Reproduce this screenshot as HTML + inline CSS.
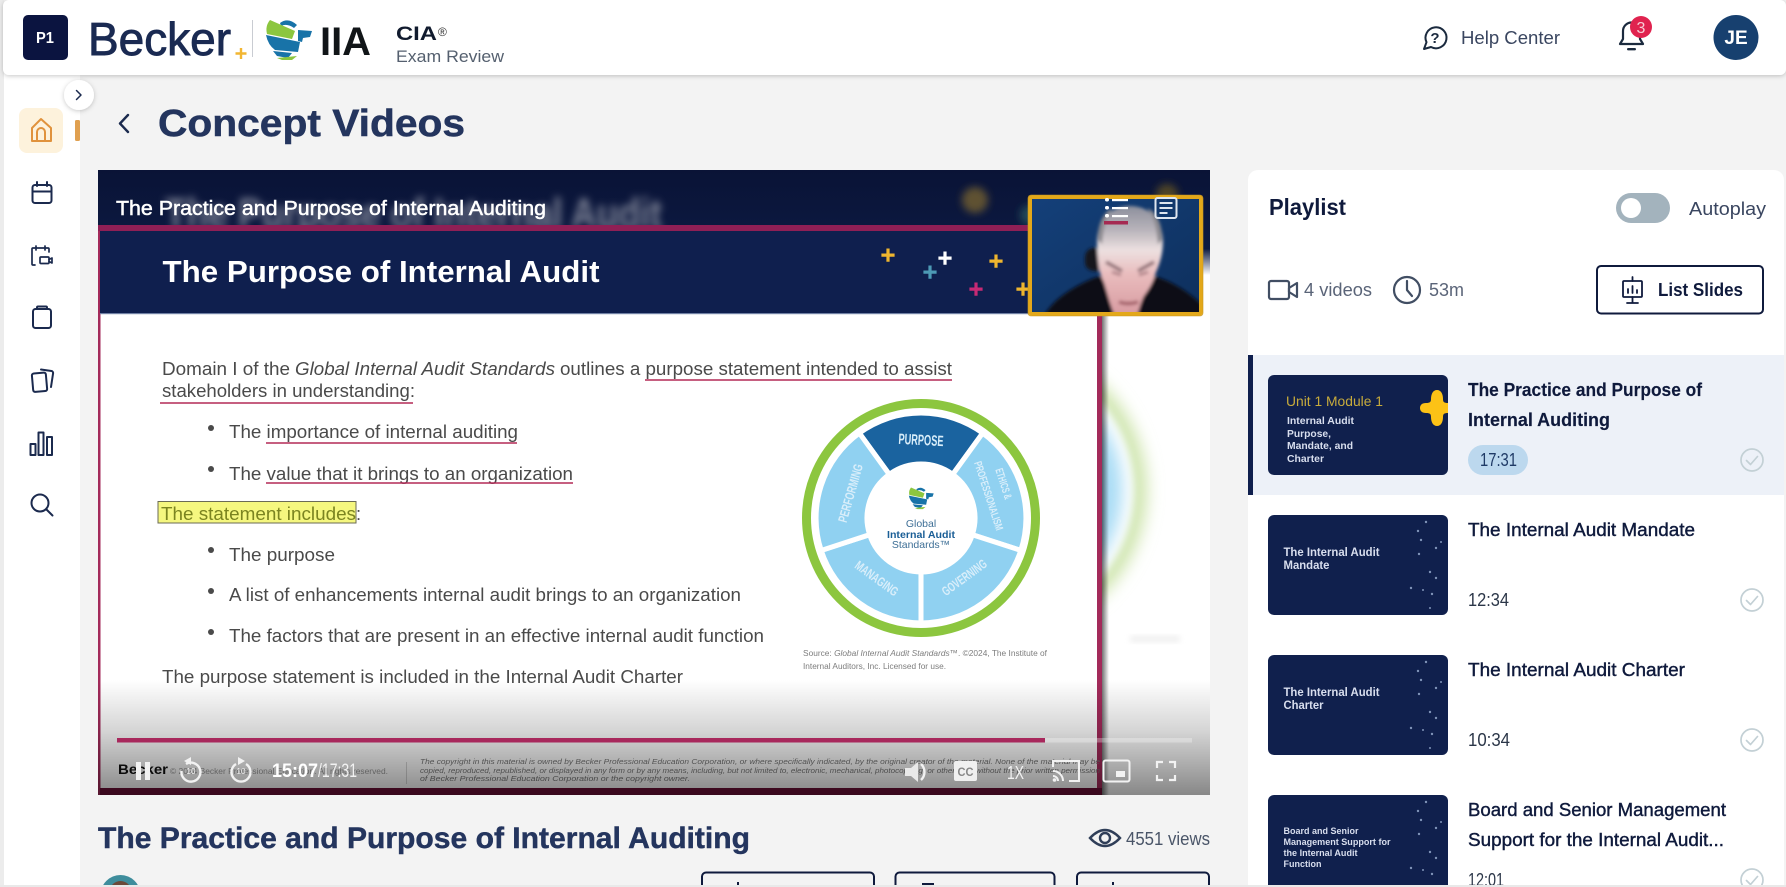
<!DOCTYPE html>
<html lang="en">
<head>
<meta charset="utf-8">
<title>Concept Videos</title>
<style>
html,body{margin:0;padding:0;width:1786px;height:887px;overflow:hidden;background:#f3f3f3}
svg{display:block}
text{font-family:"Liberation Sans",Arial,sans-serif}
.i{fill:none;stroke:#1b2a4e;stroke-width:2;stroke-linecap:round;stroke-linejoin:round}
.b{font-size:18.3px;fill:#4a4a4a}
.pt{font-size:18px;font-weight:700;fill:#0f1a3c;stroke:#0f1a3c;stroke-width:.15}
.pm{font-size:18px;fill:#0f1a3c;stroke:#0f1a3c;stroke-width:.4}
.d{font-size:18px;fill:#2b3648}
.th{font-weight:700;fill:#d8deee}
.ck{fill:none;stroke:#c3d0d5;stroke-width:1.7;stroke-linecap:round;stroke-linejoin:round}
.ul{stroke:#b32a57;stroke-width:1.4}
.seg{font-weight:700;fill:#d9eefa;text-anchor:middle}
</style>
</head>
<body>
<svg width="1786" height="887" viewBox="0 0 1786 887" xmlns="http://www.w3.org/2000/svg">
<defs>
<filter id="bl4" x="-30%" y="-30%" width="160%" height="160%"><feGaussianBlur stdDeviation="4"/></filter>
<filter id="bl8" x="-30%" y="-30%" width="160%" height="160%"><feGaussianBlur stdDeviation="8"/></filter>
<filter id="bl1" x="-20%" y="-20%" width="140%" height="140%"><feGaussianBlur stdDeviation="1.6"/></filter>
<filter id="bl3" x="-40%" y="-40%" width="180%" height="180%"><feGaussianBlur stdDeviation="3"/></filter>
<filter id="blt" x="-5%" y="-20%" width="110%" height="140%"><feGaussianBlur stdDeviation=".35"/></filter>
<filter id="sh" x="-50%" y="-50%" width="200%" height="200%"><feDropShadow dx="0" dy="1" stdDeviation="2.5" flood-color="#000" flood-opacity=".22"/></filter>
<linearGradient id="ctl" x1="0" y1="0" x2="0" y2="1"><stop offset="0" stop-color="#000" stop-opacity="0"/><stop offset=".45" stop-color="#000" stop-opacity=".17"/><stop offset="1" stop-color="#000" stop-opacity=".47"/></linearGradient>
<linearGradient id="hd" x1="0" y1="0" x2="0" y2="1"><stop offset="0" stop-color="#0a1336"/><stop offset=".75" stop-color="#0c1a42"/><stop offset="1" stop-color="#0c1a42" stop-opacity="0"/></linearGradient>
<linearGradient id="pipbg" x1="0" y1="0" x2="1" y2="1"><stop offset="0" stop-color="#14407a"/><stop offset="1" stop-color="#0e2f5c"/></linearGradient>
<linearGradient id="head" x1="0" y1="0" x2="0" y2="1"><stop offset="0" stop-color="#8c8f9c"/><stop offset=".22" stop-color="#b9b4bb"/><stop offset=".4" stop-color="#ece0e0"/><stop offset=".62" stop-color="#e9bcbd"/><stop offset="1" stop-color="#d79aa0"/></linearGradient>
<linearGradient id="shd" x1="0" y1="0" x2="1" y2="0"><stop offset="0" stop-color="#000" stop-opacity=".55"/><stop offset="1" stop-color="#000" stop-opacity="0"/></linearGradient>
<clipPath id="vid"><rect x="98" y="170" width="1112" height="625"/></clipPath>
<clipPath id="right"><rect x="1102" y="260" width="108" height="535"/></clipPath>
<clipPath id="top"><rect x="98" y="170" width="1112" height="56"/></clipPath>
<clipPath id="pip"><rect x="1030" y="197" width="171" height="117" rx="2"/></clipPath>
<clipPath id="page"><rect x="0" y="0" width="1786" height="885"/></clipPath>
<clipPath id="th1"><rect x="1268" y="375" width="180" height="100" rx="6"/></clipPath>
<g id="globe">
<path d="M280 23Q288 17 297 25L294 28Q287 23 281 26Z" fill="#1873a8"/>
<path d="M270 20L295 31L292 39L267 34Q265 26 270 20Z" fill="#8cc63f"/>
<path d="M266 35L300 42L298 52L275 50Q268 45 266 35Z" fill="#1873a8"/>
<path d="M298 30L312 31L310 37L303 38L302 42L298 41Z" fill="#1873a8"/>
<path d="M273 51L292 53L288 58L277 56Z" fill="#1873a8"/>
<path d="M277 58L297 56L292 60L282 60Z" fill="#8cc63f"/>
</g>
<g id="dots" fill="#7f93b8">
<circle cx="158" cy="7" r="1.2"/><circle cx="150" cy="16" r="1.2"/><circle cx="153" cy="25" r="1.2"/><circle cx="173" cy="27" r="1"/><circle cx="168" cy="33" r="1.2"/><circle cx="151" cy="39" r="1.2"/><circle cx="162" cy="57" r="1.2"/><circle cx="168" cy="63" r="1.2"/><circle cx="143" cy="73" r="1.2"/><circle cx="155" cy="75" r="1"/><circle cx="164" cy="79" r="1.2"/><circle cx="162" cy="93" r="1"/>
</g>
<path id="sp" d="M-1.6 -6.5h3.2v5h5v3.2h-5v5h-3.2v-5h-5v-3.2h5z"/>
</defs>

<rect width="1786" height="887" fill="#f3f3f3"/>

<!-- sidebar -->
<rect x="4" y="70" width="76" height="817" fill="#fff"/>
<rect x="0" y="0" width="4" height="887" fill="#ececec"/>
<!-- header -->
<rect x="3" y="0" width="1783" height="75" rx="6" fill="#fff" filter="url(#sh)"/>

<rect x="23" y="15" width="45" height="45" rx="5" fill="#0b1440"/>
<text x="36" y="43" font-size="15.500" font-weight="700" fill="#fff" textLength="18" lengthAdjust="spacingAndGlyphs">P1</text>
<text x="88" y="55" font-size="46" fill="#1a2a52" stroke="#1a2a52" stroke-width=".9" textLength="143" lengthAdjust="spacingAndGlyphs">Becker</text>
<path d="M235.500 53.500h11M241 48v11" stroke="#f2b632" stroke-width="2.400" fill="none"/>
<rect x="252" y="20" width="1" height="37" fill="#c9ccd2"/>
<use href="#globe"/>
<text x="320" y="55" font-size="40" font-weight="700" fill="#111518" textLength="51" lengthAdjust="spacingAndGlyphs">IIA</text>
<text x="396" y="40" font-size="19" font-weight="700" fill="#111b2e" textLength="41" lengthAdjust="spacingAndGlyphs">CIA</text>
<text x="438" y="36" font-size="12" fill="#333">®</text>
<text x="396" y="62" font-size="17" fill="#55606f" textLength="108" lengthAdjust="spacingAndGlyphs">Exam Review</text>

<!-- help -->
<path d="M1424 49l2.500-6.800A10.500 10.500 0 1 1 1431 47Z" fill="none" stroke="#1b2a3e" stroke-width="2" stroke-linejoin="round"/>
<text x="1435" y="43" font-size="15" font-weight="700" fill="#1b2a3e" text-anchor="middle">?</text>
<text x="1461" y="44" font-size="18.500" fill="#3a4660" textLength="99" lengthAdjust="spacingAndGlyphs">Help Center</text>
<!-- bell -->
<g fill="none" stroke="#1b2a3e" stroke-width="2.200" stroke-linecap="round" stroke-linejoin="round">
<path d="M1620 44h23l-3-5v-8a8.500 8.500 0 0 0-17 0v8Z"/>
</g>
<rect x="1627" y="48" width="9" height="2.400" rx="1.200" fill="#1b2a3e"/>
<circle cx="1641" cy="27" r="11" fill="#e0234f"/>
<text x="1641" y="33" font-size="16" fill="#f7cdd6" text-anchor="middle">3</text>
<circle cx="1736" cy="37.500" r="22.500" fill="#17406f"/>
<text x="1736" y="44" font-size="19" font-weight="700" fill="#fff" text-anchor="middle">JE</text>

<!-- sidebar icons -->
<rect x="19" y="108" width="44" height="45" rx="8" fill="#fdf2dc"/>
<g fill="none" stroke="#e0923c" stroke-width="2" stroke-linejoin="round" stroke-linecap="round">
<path d="M32 141v-13l9-9 10 9v13Z"/><path d="M37 141v-9a4 4 0 0 1 8 0v9"/>
</g>
<rect x="75" y="120" width="5" height="21" rx="1.500" fill="#e0a050"/>
<g class="i">
<rect x="32.500" y="185" width="19" height="18" rx="2.500"/><path d="M32.500 191.500h19M37 182v4M47 182v4"/>
<path d="M35 265h-2a1 1 0 0 1-1-1v-15a1 1 0 0 1 1-1h15a1 1 0 0 1 1 1v3M36 246v4M45 246v4" stroke-width="1.700"/>
<rect x="40" y="257" width="9" height="6.500" rx="1" stroke-width="1.700"/><path d="M49 259.500l3-1.500v5l-3-1.500" stroke-width="1.700"/>
<rect x="33" y="309" width="18" height="19" rx="2.500"/><path d="M37 309v-1.500a1 1 0 0 1 1-1h8a1 1 0 0 1 1 1v1.500"/>
<rect x="32.500" y="373" width="14" height="18.500" rx="2" transform="rotate(-5 39.500 382)"/>
<path d="M41 369.500l10.500 1.500a2 2 0 0 1 1.600 2.200L51 387"/>
<rect x="30.500" y="444" width="5" height="11"/><rect x="38.500" y="432.500" width="5" height="22.500"/><rect x="47" y="437" width="5" height="18"/>
<circle cx="40" cy="503" r="8.500"/><path d="M46.500 509.500l6 6"/>
</g>
<!-- collapse -->
<circle cx="79" cy="95" r="15" fill="#fff" filter="url(#sh)"/>
<path d="M76.500 90.500l4.500 4.500-4.500 4.500" fill="none" stroke="#1b2a4e" stroke-width="1.500" stroke-linecap="round" stroke-linejoin="round"/>

<!-- title -->
<path d="M128 115l-8 8.500 8 8.500" fill="none" stroke="#1b2a4e" stroke-width="2.400" stroke-linecap="round" stroke-linejoin="round"/>
<text x="158" y="136" font-size="38" font-weight="700" fill="#24355e" stroke="#24355e" stroke-width=".5" textLength="307" lengthAdjust="spacingAndGlyphs">Concept Videos</text>

<!-- VIDEO -->
<g clip-path="url(#vid)">
<rect x="98" y="170" width="1112" height="625" fill="#fff"/>
<rect x="98" y="170" width="1112" height="105" fill="url(#hd)"/>
<!-- blurred backdrop -->
<g clip-path="url(#top)">
<text x="165" y="228" font-size="43" font-weight="700" fill="#7d8294" filter="url(#bl4)" textLength="497" lengthAdjust="spacingAndGlyphs">The Purpose of Internal Audit</text>
<circle cx="975" cy="200" r="13" fill="#5f5130" filter="url(#bl4)"/>
<circle cx="1030" cy="215" r="10" fill="#234a58" filter="url(#bl4)"/>
<circle cx="1167" cy="195" r="11" fill="#4f4526" filter="url(#bl4)"/>
</g>
<g clip-path="url(#right)">
<circle cx="1000" cy="490" r="147" fill="#cfe5ad" filter="url(#bl8)"/>
<circle cx="1000" cy="490" r="134" fill="#fff" filter="url(#bl4)"/>
<circle cx="1000" cy="490" r="122" fill="#a9dcf5" filter="url(#bl8)"/>
<rect x="1130" y="636" width="50" height="6" fill="#efefef" filter="url(#bl3)"/>
</g>
<rect x="1102" y="314" width="7" height="481" fill="url(#shd)"/>

<!-- slide -->
<rect x="98" y="226" width="1004" height="569" fill="#a32a5a"/>
<rect x="100.500" y="231" width="996.500" height="557" fill="#fff"/>
<rect x="100" y="231" width="1000" height="83" fill="#0f1f4e"/>
<rect x="100" y="313" width="1000" height="1.200" fill="#6f7fa3"/>
<rect x="98" y="225" width="1004" height="6" fill="#8f1f55"/>
<rect x="100" y="788" width="1002" height="7" fill="#6d1037"/>

<text x="162.500" y="282" font-size="30.500" font-weight="700" fill="#fff" textLength="437" lengthAdjust="spacingAndGlyphs">The Purpose of Internal Audit</text>
<g>
<use href="#sp" x="888" y="255" fill="#eeb52f"/><use href="#sp" x="945" y="258" fill="#fff"/><use href="#sp" x="930" y="272" fill="#4d9ab5"/><use href="#sp" x="996" y="261" fill="#eeb52f"/><use href="#sp" x="976" y="289" fill="#c62a74"/><use href="#sp" x="1023" y="289" fill="#eeb52f"/>
</g>

<text class="b" x="162" y="375" textLength="128" lengthAdjust="spacingAndGlyphs">Domain I of the</text>
<text class="b" x="295" y="375" font-style="italic" textLength="260" lengthAdjust="spacingAndGlyphs">Global Internal Audit Standards</text>
<text class="b" x="560" y="375" textLength="392" lengthAdjust="spacingAndGlyphs">outlines a purpose statement intended to assist</text>
<text class="b" x="162" y="397" textLength="253" lengthAdjust="spacingAndGlyphs">stakeholders in understanding:</text>
<circle cx="211" cy="428" r="3" fill="#4a4a4a"/>
<text class="b" x="229" y="438" textLength="289" lengthAdjust="spacingAndGlyphs">The importance of internal auditing</text>
<circle cx="211" cy="469" r="3" fill="#4a4a4a"/>
<text class="b" x="229" y="480" textLength="344" lengthAdjust="spacingAndGlyphs">The value that it brings to an organization</text>
<rect x="158" y="501.500" width="198" height="21.500" fill="#f5f77f" stroke="#6b6b55" stroke-width="1"/>
<text class="b" x="161" y="520" style="fill:#7b8420" textLength="195" lengthAdjust="spacingAndGlyphs">The statement includes</text>
<text class="b" x="356" y="520">:</text>
<circle cx="211" cy="550" r="3" fill="#4a4a4a"/>
<text class="b" x="229" y="561" textLength="106" lengthAdjust="spacingAndGlyphs">The purpose</text>
<circle cx="211" cy="591" r="3" fill="#4a4a4a"/>
<text class="b" x="229" y="601" textLength="512" lengthAdjust="spacingAndGlyphs">A list of enhancements internal audit brings to an organization</text>
<circle cx="211" cy="632" r="3" fill="#4a4a4a"/>
<text class="b" x="229" y="642" textLength="535" lengthAdjust="spacingAndGlyphs">The factors that are present in an effective internal audit function</text>
<text class="b" x="162" y="683" textLength="521" lengthAdjust="spacingAndGlyphs">The purpose statement is included in the Internal Audit Charter</text>
<path class="ul" d="M645 380H952M160 403H413M266 443H517M266 483H573"/>

<!-- wheel -->
<circle cx="921" cy="518" r="114.500" fill="none" stroke="#8cc63f" stroke-width="9"/>
<g stroke="#fff" stroke-width="5" stroke-linejoin="round">
<path fill="#1a639f" d="M859.300 433.100A105 105 0 0 1 982.700 433.100L952.700 474.300A54 54 0 0 0 889.300 474.300Z"/>
<path fill="#90d1f1" transform="rotate(72 921 518)" d="M859.300 433.100A105 105 0 0 1 982.700 433.100L952.700 474.300A54 54 0 0 0 889.300 474.300Z"/>
<path fill="#90d1f1" transform="rotate(144 921 518)" d="M859.300 433.100A105 105 0 0 1 982.700 433.100L952.700 474.300A54 54 0 0 0 889.300 474.300Z"/>
<path fill="#90d1f1" transform="rotate(216 921 518)" d="M859.300 433.100A105 105 0 0 1 982.700 433.100L952.700 474.300A54 54 0 0 0 889.300 474.300Z"/>
<path fill="#90d1f1" transform="rotate(288 921 518)" d="M859.300 433.100A105 105 0 0 1 982.700 433.100L952.700 474.300A54 54 0 0 0 889.300 474.300Z"/>
</g>
<text class="seg" x="921" y="445" font-size="15" transform="rotate(3 921 440)" textLength="45" lengthAdjust="spacingAndGlyphs">PURPOSE</text>
<text class="seg" x="850" y="498" font-size="13" transform="rotate(-74 850 493)" textLength="60" lengthAdjust="spacingAndGlyphs">PERFORMING</text>
<text class="seg" x="877" y="583" font-size="13" transform="rotate(36 877 578)" textLength="50" lengthAdjust="spacingAndGlyphs">MANAGING</text>
<text class="seg" x="964" y="582" font-size="13" transform="rotate(-36 964 577)" textLength="52" lengthAdjust="spacingAndGlyphs">GOVERNING</text>
<text class="seg" x="1003" y="487" font-size="11" transform="rotate(72 1003 484)" textLength="32" lengthAdjust="spacingAndGlyphs">ETHICS &amp;</text>
<text class="seg" x="988" y="499" font-size="11" transform="rotate(72 988 496)" textLength="72" lengthAdjust="spacingAndGlyphs">PROFESSIONALISM</text>
<g transform="translate(921 498) scale(.54) translate(-288.500 -39.500)"><use href="#globe"/></g>
<text x="921" y="527" font-size="10.500" fill="#3e6f96" text-anchor="middle">Global</text>
<text x="921" y="538" font-size="10.500" font-weight="700" fill="#1a5e96" text-anchor="middle" textLength="68" lengthAdjust="spacingAndGlyphs">Internal Audit</text>
<text x="921" y="548" font-size="10.500" fill="#3e6f96" text-anchor="middle">Standards™</text>
<text x="803" y="656" font-size="8.700" fill="#7d7d7d" textLength="244" lengthAdjust="spacingAndGlyphs">Source: <tspan font-style="italic">Global Internal Audit Standards™</tspan>. ©2024, The Institute of</text>
<text x="803" y="669" font-size="8.700" fill="#7d7d7d" textLength="143" lengthAdjust="spacingAndGlyphs">Internal Auditors, Inc. Licensed for use.</text>

<!-- slide footer -->
<text x="118" y="774" font-size="14" font-weight="700" fill="#111" textLength="50" lengthAdjust="spacingAndGlyphs">Becker</text>
<text x="170" y="774" font-size="8" fill="#9a9a9a" filter="url(#blt)" textLength="218" lengthAdjust="spacingAndGlyphs">© 2024 Becker Professional Education. All rights reserved.</text>
<rect x="406" y="762" width="1" height="22" fill="#d5d5d5"/>
<g font-size="7.500" font-style="italic" fill="#777" filter="url(#blt)">
<text x="420" y="764" textLength="680" lengthAdjust="spacingAndGlyphs">The copyright in this material is owned by Becker Professional Education Corporation, or where specifically indicated, by the original creator of the material. None of the material may be</text>
<text x="420" y="773" textLength="680" lengthAdjust="spacingAndGlyphs">copied, reproduced, republished, or displayed in any form or by any means, including, but not limited to, electronic, mechanical, photocopying, or otherwise, without the prior written permission</text>
<text x="420" y="781" textLength="270" lengthAdjust="spacingAndGlyphs">of Becker Professional Education Corporation or the copyright owner.</text>
</g>

<!-- gradient -->
<rect x="98" y="680" width="1112" height="115" fill="url(#ctl)"/>

<!-- progress -->
<rect x="117" y="738" width="1075" height="4.500" fill="#fff" opacity=".3"/>
<rect x="117" y="738" width="928" height="4.500" fill="#a8285c"/>

<!-- controls -->
<rect x="136" y="762" width="5" height="18" fill="#f2f2f2"/><rect x="145" y="762" width="5" height="18" fill="#f2f2f2"/>
<g fill="none" stroke="#f2f2f2" stroke-width="2.400">
<path d="M186 764a9.500 9.500 0 1 1-4.500 7"/>
<path d="M236 764a9.500 9.500 0 1 0 10 0"/>
</g>
<path d="M191 757v8l-7-4Z M238 757v8l7-4Z" fill="#f2f2f2"/>
<text x="191" y="774" font-size="8" fill="#f2f2f2" text-anchor="middle">10</text>
<text x="241" y="774" font-size="8" fill="#f2f2f2" text-anchor="middle">10</text>
<text x="272" y="777" font-size="19" font-weight="700" fill="#fff" textLength="46" lengthAdjust="spacingAndGlyphs">15:07</text>
<text x="318" y="777" font-size="19" fill="#f2f2f2" textLength="39" lengthAdjust="spacingAndGlyphs">/17:31</text>

<path d="M905 768h6l7-6v20l-7-6h-6Z" fill="#e9e9e9"/>
<path d="M921 764a11 11 0 0 1 0 16" fill="none" stroke="#f2f2f2" stroke-width="2.400"/>
<rect x="954" y="761" width="23" height="20" rx="2" fill="#f0f0f0"/>
<text x="965.500" y="776" font-size="12" font-weight="700" fill="#888" text-anchor="middle" textLength="16" lengthAdjust="spacingAndGlyphs">CC</text>
<text x="1007" y="779" font-size="18" fill="#f2f2f2" textLength="17" lengthAdjust="spacingAndGlyphs">1X</text>
<g fill="none" stroke="#f2f2f2" stroke-width="2">
<path d="M1053 767v-6h26v20h-10"/>
<path d="M1053 771a10 10 0 0 1 10 10M1053 776a5 5 0 0 1 5 5"/>
</g>
<circle cx="1054.500" cy="780" r="1.800" fill="#f2f2f2"/>
<rect x="1103.500" y="760.500" width="26" height="21" rx="2" fill="none" stroke="#f2f2f2" stroke-width="2"/>
<rect x="1116" y="771" width="9" height="6" fill="#f2f2f2"/>
<path d="M1157 768v-6h6M1169 762h6v6M1175 775v5h-6M1163 780h-6v-5" fill="none" stroke="#f2f2f2" stroke-width="2.200"/>

<!-- overlay title -->
<text x="116" y="215" font-size="20" fill="#fff" stroke="#fff" stroke-width=".5" textLength="430" lengthAdjust="spacingAndGlyphs">The Practice and Purpose of Internal Auditing</text>
</g>

<!-- pip -->
<g clip-path="url(#pip)">
<rect x="1028" y="195" width="175" height="121" fill="url(#pipbg)"/>
<g filter="url(#bl1)">
<path d="M1085 256q2-9 12-8l2 23q-13 1-14-8Z" fill="#17171e"/>
<path d="M1044 316q12-22 50-38l8-2 52 0q26 8 47 28v12Z" fill="#0d0d12"/>
<path d="M1097 242c0-22 14-36 33-36s33 14 33 36c0 10-3 22-7 30-2 8-6 16-12 24-3 6-5 14-7 20h-22c-4-8-7-20-10-30-1-5-5-10-6-18-1-8-2-16-2-26Z" fill="url(#head)"/>
<path d="M1106 262l16 9M1154 262l-16 9" fill="none" stroke="#8f6e74" stroke-width="3.500"/>
<path d="M1112 272l9 3M1148 272l-9 3" fill="none" stroke="#a4777e" stroke-width="2.500"/>
<path d="M1119 302q9 3 19 0" fill="none" stroke="#a25f68" stroke-width="3.500"/>
<path d="M1098 240c-1-18 8-30 15-32-8 10-10 24-11 36ZM1162 240c1-18-8-30-15-32 8 10 10 24 11 36Z" fill="#8c8a90"/>
</g>
</g>
<rect x="1030" y="197" width="171" height="117" rx="2" fill="none" stroke="#e3a81a" stroke-width="4"/>
<rect x="1028" y="195" width="175" height="121" rx="3" fill="none" stroke="#c99824" stroke-width=".6"/>
<g fill="#fff">
<rect x="1105" y="198" width="4" height="3.500" rx="1.700"/><rect x="1112" y="199" width="16" height="2.200"/>
<rect x="1105" y="206" width="4" height="3.500" rx="1.700"/><rect x="1112" y="207" width="16" height="2.200"/>
<rect x="1105" y="214" width="4" height="3.500" rx="1.700"/><rect x="1112" y="215" width="16" height="2.200"/>
</g>
<rect x="1104" y="221" width="24" height="3.500" fill="#a52a52"/>
<rect x="1155.500" y="198" width="21" height="20" rx="2" fill="none" stroke="#dfe6ef" stroke-width="2"/>
<path d="M1159.500 203h13M1159.500 208h13M1159.500 213h8" stroke="#dfe6ef" stroke-width="2"/>

<!-- below video -->
<text x="98" y="848" font-size="30" font-weight="700" fill="#24355e" stroke="#24355e" stroke-width=".45" textLength="652" lengthAdjust="spacingAndGlyphs">The Practice and Purpose of Internal Auditing</text>
<g fill="none" stroke="#2f3e58" stroke-width="2.400">
<path d="M1090 838q15-16 30 0q-15 16-30 0Z"/><circle cx="1105" cy="838" r="5"/>
</g>
<text x="1126" y="845" font-size="18" fill="#4a5568" textLength="84" lengthAdjust="spacingAndGlyphs">4551 views</text>

<g clip-path="url(#page)">
<g fill="none" stroke="#0f1a3c" stroke-width="2">
<rect x="702" y="872.500" width="172" height="30" rx="4"/>
<rect x="895.500" y="872.500" width="159" height="30" rx="4"/>
<rect x="1077" y="872.500" width="132" height="30" rx="4"/>
</g>
<path d="M738 882v4M1113 882v4" stroke="#0f1a3c" stroke-width="2"/>
<path d="M922 884h12" stroke="#0f1a3c" stroke-width="2"/>
<circle cx="120.500" cy="895" r="20" fill="#3e8d9c"/>
<circle cx="120.500" cy="892" r="11" fill="#6b4a3a"/>
<circle cx="120.500" cy="896" r="9" fill="#d9a88c"/>
</g>

<!-- PLAYLIST -->
<path d="M1248 180a10 10 0 0 1 10-10H1774a10 10 0 0 1 10 10V887H1248Z" fill="#fff"/>
<text x="1269" y="215" font-size="23" font-weight="700" fill="#0f1a3c" textLength="77" lengthAdjust="spacingAndGlyphs">Playlist</text>
<rect x="1616" y="193" width="54" height="30" rx="15" fill="#a3b3bd"/>
<circle cx="1631" cy="208" r="10" fill="#fff"/>
<text x="1689" y="215" font-size="18.500" fill="#3a4660" textLength="77" lengthAdjust="spacingAndGlyphs">Autoplay</text>

<g fill="none" stroke="#414e63" stroke-width="2.200" stroke-linejoin="round">
<rect x="1269" y="281" width="20" height="18" rx="2"/><path d="M1289 288l8-5v14l-8-5Z"/>
<circle cx="1407" cy="290" r="13"/><path d="M1407 281v9l5 6" stroke-linecap="round"/>
</g>
<text x="1304" y="296" font-size="18.500" fill="#5a6478" textLength="68" lengthAdjust="spacingAndGlyphs">4 videos</text>
<text x="1429" y="296" font-size="18.500" fill="#5a6478" textLength="35" lengthAdjust="spacingAndGlyphs">53m</text>

<rect x="1597" y="266" width="166" height="47.500" rx="4" fill="#fff" stroke="#0f1a3c" stroke-width="2"/>
<g fill="none" stroke="#0f1a3c" stroke-width="1.800" stroke-linecap="round">
<rect x="1623" y="281" width="19" height="16" rx="1"/><path d="M1632.500 277v4M1632.500 297v6M1627 303h11M1628 293v-4M1632.500 293v-7M1637 293v-3"/>
</g>
<text x="1658" y="296" font-size="18" font-weight="700" fill="#0f1a3c" textLength="85" lengthAdjust="spacingAndGlyphs">List Slides</text>

<!-- item 1 -->
<rect x="1248" y="355" width="536" height="140" fill="#edf1f8"/>
<rect x="1248" y="355" width="5" height="140" fill="#0f1f4d"/>
<rect x="1268" y="375" width="180" height="100" rx="6" fill="#10204d"/>
<text x="1286" y="406" font-size="14" fill="#c7ab3c" textLength="97" lengthAdjust="spacingAndGlyphs">Unit 1 Module 1</text>
<text class="th" x="1287" y="424" font-size="10.500" textLength="67" lengthAdjust="spacingAndGlyphs">Internal Audit</text>
<text class="th" x="1287" y="437" font-size="10.500" textLength="44" lengthAdjust="spacingAndGlyphs">Purpose,</text>
<text class="th" x="1287" y="449" font-size="10.500" textLength="66" lengthAdjust="spacingAndGlyphs">Mandate, and</text>
<text class="th" x="1287" y="462" font-size="10.500" textLength="37" lengthAdjust="spacingAndGlyphs">Charter</text>
<g clip-path="url(#th1)"><path d="M1437 390c4 0 6 4 6 9c0 3 1 4 5 4v10c-4 0-5 1-5 4c0 5-2 9-6 9c-4 0-6-4-6-9c0-3-1-4-5-4c-4 0-6-2-6-5c0-3 2-5 6-5c4 0 5-1 5-4c0-5 2-9 6-9Z" fill="#fcc216"/></g>
<text class="pt" x="1468" y="396" textLength="234" lengthAdjust="spacingAndGlyphs">The Practice and Purpose of</text>
<text class="pt" x="1468" y="426" textLength="142" lengthAdjust="spacingAndGlyphs">Internal Auditing</text>
<rect x="1468" y="445" width="60" height="30" rx="15" fill="#bcd8ee"/>
<text class="d" x="1480" y="466" style="fill:#1f3a66" textLength="37" lengthAdjust="spacingAndGlyphs">17:31</text>
<g class="ck"><circle cx="1752" cy="460" r="11"/><path d="M1746.500 460.500l4 4 7-8"/></g>

<!-- item 2 -->
<rect x="1268" y="515" width="180" height="100" rx="6" fill="#10204d"/>
<use href="#dots" x="1268" y="515"/>
<text class="th" x="1283.500" y="556" font-size="11.500" textLength="96" lengthAdjust="spacingAndGlyphs">The Internal Audit</text>
<text class="th" x="1283.500" y="569" font-size="11.500" textLength="46" lengthAdjust="spacingAndGlyphs">Mandate</text>
<text class="pm" x="1468" y="536" textLength="227" lengthAdjust="spacingAndGlyphs">The Internal Audit Mandate</text>
<text class="d" x="1468" y="606" textLength="41" lengthAdjust="spacingAndGlyphs">12:34</text>
<g class="ck"><circle cx="1752" cy="600" r="11"/><path d="M1746.500 600.500l4 4 7-8"/></g>

<!-- item 3 -->
<rect x="1268" y="655" width="180" height="100" rx="6" fill="#10204d"/>
<use href="#dots" x="1268" y="655"/>
<text class="th" x="1283.500" y="696" font-size="11.500" textLength="96" lengthAdjust="spacingAndGlyphs">The Internal Audit</text>
<text class="th" x="1283.500" y="709" font-size="11.500" textLength="40" lengthAdjust="spacingAndGlyphs">Charter</text>
<text class="pm" x="1468" y="676" textLength="217" lengthAdjust="spacingAndGlyphs">The Internal Audit Charter</text>
<text class="d" x="1468" y="746" textLength="42" lengthAdjust="spacingAndGlyphs">10:34</text>
<g class="ck"><circle cx="1752" cy="740" r="11"/><path d="M1746.500 740.500l4 4 7-8"/></g>

<!-- item 4 -->
<g clip-path="url(#page)">
<rect x="1268" y="795" width="180" height="100" rx="6" fill="#10204d"/>
<use href="#dots" x="1268" y="795"/>
<text class="th" x="1283.500" y="834" font-size="9.500" textLength="75" lengthAdjust="spacingAndGlyphs">Board and Senior</text>
<text class="th" x="1283.500" y="845" font-size="9.500" textLength="107" lengthAdjust="spacingAndGlyphs">Management Support for</text>
<text class="th" x="1283.500" y="856" font-size="9.500" textLength="74" lengthAdjust="spacingAndGlyphs">the Internal Audit</text>
<text class="th" x="1283.500" y="867" font-size="9.500" textLength="38" lengthAdjust="spacingAndGlyphs">Function</text>
<text class="pm" x="1468" y="816" textLength="258" lengthAdjust="spacingAndGlyphs">Board and Senior Management</text>
<text class="pm" x="1468" y="846" textLength="256" lengthAdjust="spacingAndGlyphs">Support for the Internal Audit...</text>
<text class="d" x="1468" y="886" textLength="36" lengthAdjust="spacingAndGlyphs">12:01</text>
<g class="ck"><circle cx="1752" cy="880" r="11"/><path d="M1746.500 880.500l4 4 7-8"/></g>
</g>

<rect x="0" y="885" width="1786" height="2" fill="#e9e9e9"/>
</svg>
</body>
</html>
